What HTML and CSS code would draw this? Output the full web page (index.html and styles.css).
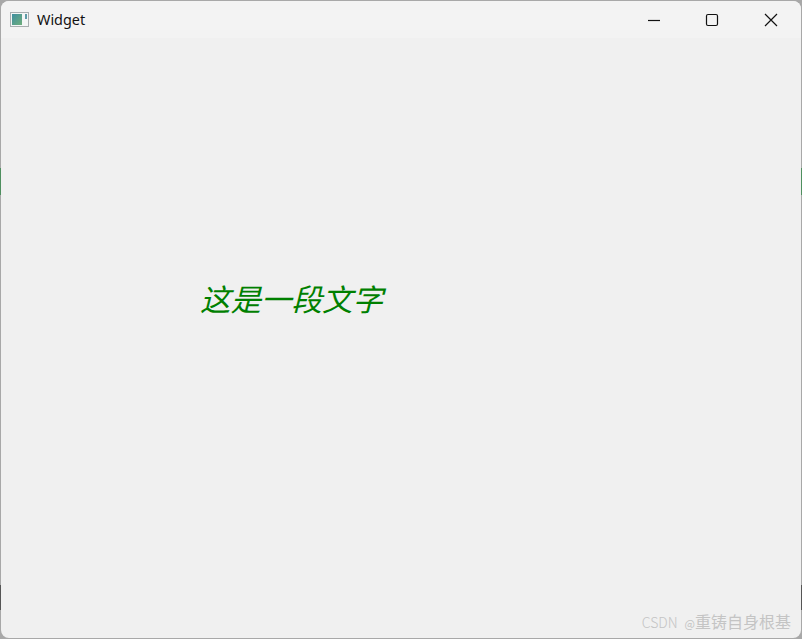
FILE: index.html
```html
<!DOCTYPE html>
<html lang="zh-CN">
<head>
    <meta charset="UTF-8">
    <title>Widget</title>
    <link rel="stylesheet" href="styles.css">
</head>
<body>
    <div class="window">
        <!-- Title Bar -->
        <div class="title-bar">
            <svg class="app-icon" width="20" height="16" viewBox="0 0 20 16">
                <defs>
                    <linearGradient id="pane" x1="0" y1="0" x2="1" y2="1">
                        <stop offset="0" stop-color="#3f8fa0"/>
                        <stop offset="1" stop-color="#6fae7c"/>
                    </linearGradient>
                </defs>
                <rect x="0.5" y="0.5" width="18" height="14" fill="#f4f6f6" stroke="#a9aeb0"/>
                <rect x="2" y="2" width="10" height="11" fill="url(#pane)"/>
                <rect x="15" y="2" width="2" height="5" fill="#5f9aa8"/>
            </svg>
            <span class="title-text">Widget</span>
            <div class="window-btns">
                <button class="win-btn">
                    <svg width="14" height="14" viewBox="0 0 14 14"><path d="M1 7.5H13" stroke="#111" stroke-width="1.2" fill="none"/></svg>
                </button>
                <button class="win-btn">
                    <svg width="14" height="14" viewBox="0 0 14 14"><rect x="1.5" y="1.5" width="11" height="11" rx="1.5" stroke="#111" stroke-width="1.2" fill="none"/></svg>
                </button>
                <button class="win-btn close-btn">
                    <svg width="14" height="14" viewBox="0 0 14 14"><path d="M1 1L13 13M13 1L1 13" stroke="#111" stroke-width="1.2" fill="none"/></svg>
                </button>
            </div>
        </div>

        <!-- Content -->
        <div class="content">
            <div class="label">这是一段文字</div>
            <div class="watermark"><span class="wm-site">CSDN</span><span class="wm-at">@</span>重铸自身根基</div>
        </div>
    </div>
</body>
</html>
```

FILE: styles.css
```css
/* General Reset */
* {
    margin: 0;
    padding: 0;
    box-sizing: border-box;
}

/* Desktop peeking out round the window */
body {
    width: 802px;
    height: 639px;
    background: linear-gradient(to bottom, #a8a8a8 0 168px, #4f8f5f 168px 195px, #a8a8a8 195px 585px, #555555 585px 610px, #a8a8a8 610px);
    overflow: hidden;
    font-family: "Noto Sans", "Noto Sans CJK SC", sans-serif;
}

/* Window */
.window {
    width: 800px;
    height: 637px;
    margin: 1px 0 0 1px;
    background-color: #f0f0f0;
    border-radius: 8px;
    display: flex;
    flex-direction: column;
}

/* Title Bar */
.title-bar {
    height: 37px;
    display: flex;
    align-items: center;
    padding-left: 9px;
    background-color: #f3f3f3;
    border-radius: 8px 8px 0 0;
}

.app-icon {
    margin-right: 7px;
}

.title-text {
    font-size: 14.4px;
    color: #111111;
}

.window-btns {
    margin-left: auto;
    display: flex;
    padding-right: 1px;
}

.win-btn {
    width: 58px;
    height: 37px;
    border: none;
    background: none;
    display: flex;
    align-items: center;
    justify-content: center;
}

.close-btn {
    margin-left: 1px;
}

/* Content */
.content {
    flex: 1;
    display: flex;
    flex-direction: column;
    padding: 240px 10px 4px 199px;
}

.label {
    font-family: "Noto Sans CJK SC", sans-serif;
    font-size: 30.5px;
    font-style: italic;
    line-height: 40px;
    color: #008000;
}

.watermark {
    margin-top: auto;
    align-self: flex-end;
    font-family: "Noto Sans CJK SC", sans-serif;
    font-size: 16px;
    line-height: 22px;
    color: #c4c4c4;
}

.wm-site {
    font-size: 14px;
    font-weight: 300;
    margin-right: 7px;
}

.wm-at {
    font-size: 11px;
}
```
